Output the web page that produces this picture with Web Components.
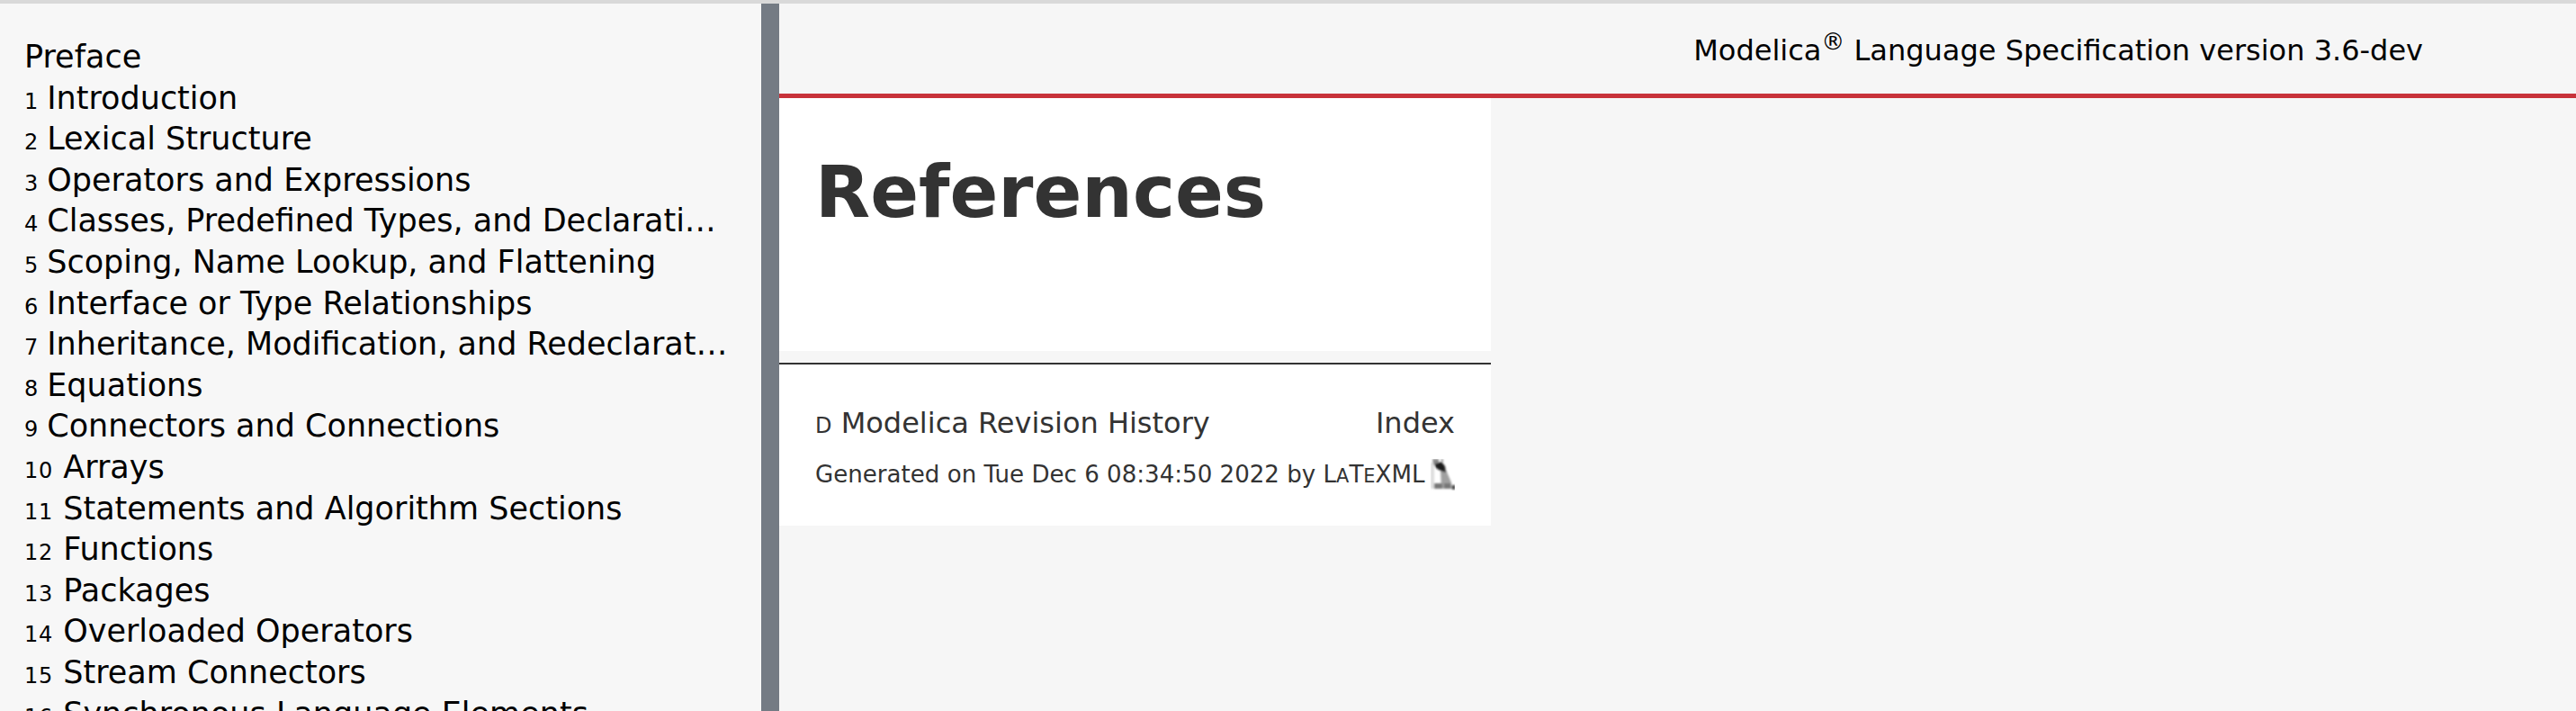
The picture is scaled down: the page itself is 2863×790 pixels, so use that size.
<!DOCTYPE html>
<html>
<head>
<meta charset="utf-8">
<title>References</title>
<style>
  html, body { margin: 0; height: 100%; overflow: hidden; background: #f6f6f6; }
  body { font-family: "DejaVu Sans", Verdana, sans-serif; }
</style>
</head>
<body>
<mls-page>
  <mls-toc>
    <mls-toc-item>Preface</mls-toc-item>
    <mls-toc-item num="1">Introduction</mls-toc-item>
    <mls-toc-item num="2">Lexical Structure</mls-toc-item>
    <mls-toc-item num="3">Operators and Expressions</mls-toc-item>
    <mls-toc-item num="4">Classes, Predefined Types, and Declarations</mls-toc-item>
    <mls-toc-item num="5">Scoping, Name Lookup, and Flattening</mls-toc-item>
    <mls-toc-item num="6">Interface or Type Relationships</mls-toc-item>
    <mls-toc-item num="7">Inheritance, Modification, and Redeclarations</mls-toc-item>
    <mls-toc-item num="8">Equations</mls-toc-item>
    <mls-toc-item num="9">Connectors and Connections</mls-toc-item>
    <mls-toc-item num="10">Arrays</mls-toc-item>
    <mls-toc-item num="11">Statements and Algorithm Sections</mls-toc-item>
    <mls-toc-item num="12">Functions</mls-toc-item>
    <mls-toc-item num="13">Packages</mls-toc-item>
    <mls-toc-item num="14">Overloaded Operators</mls-toc-item>
    <mls-toc-item num="15">Stream Connectors</mls-toc-item>
    <mls-toc-item num="16">Synchronous Language Elements</mls-toc-item>
  </mls-toc>
  <mls-main>
    <mls-header>Modelica<sup>®</sup> Language Specification version 3.6-dev</mls-header>
    <mls-article>
      <h1 slot="title">References</h1>
    </mls-article>
    <mls-footer></mls-footer>
  </mls-main>
</mls-page>

<script>
class MlsPage extends HTMLElement {
  constructor() {
    super();
    this.attachShadow({ mode: 'open' });
    this.shadowRoot.innerHTML = `
      <style>
        :host { display: flex; flex-direction: column; height: 790px; overflow: hidden; }
        .topline { flex: none; height: 4px; background: #d9d9d9; }
        .row { flex: 1; display: flex; min-height: 0; }
        ::slotted(mls-toc) { flex: none; width: 846px; }
        .bar { flex: none; width: 20px; background: #747b84; }
        ::slotted(mls-main) { flex: 1; min-width: 0; }
      </style>
      <div class="topline"></div>
      <div class="row">
        <slot name="toc"></slot>
        <div class="bar"></div>
        <slot name="main"></slot>
      </div>
    `;
  }
  connectedCallback() {
    this.querySelector('mls-toc').slot = 'toc';
    this.querySelector('mls-main').slot = 'main';
  }
}

class MlsToc extends HTMLElement {
  constructor() {
    super();
    this.attachShadow({ mode: 'open' });
    this.shadowRoot.innerHTML = `
      <style>
        :host { display: block; box-sizing: border-box; padding: 37px 0 0 27px; overflow: hidden; background: #f7f7f7; color: #000; }
      </style>
      <slot></slot>
    `;
  }
}

class MlsTocItem extends HTMLElement {
  constructor() {
    super();
    this.attachShadow({ mode: 'open' });
  }
  connectedCallback() {
    const num = this.getAttribute('num');
    const spacing = num && num.length > 1 ? 0.75 : -1.2;
    this.shadowRoot.innerHTML = `
      <style>
        :host { display: block; width: 785px; height: 45.6px; line-height: 45.6px; font-size: 35px; white-space: nowrap; overflow: hidden; text-overflow: ellipsis; }
        .num { font-size: 24px; letter-spacing: ${spacing}px; }
      </style>
      ${num ? `<span class="num">${num}</span> ` : ''}<slot></slot>
    `;
  }
}

class MlsMain extends HTMLElement {
  constructor() {
    super();
    this.attachShadow({ mode: 'open' });
    this.shadowRoot.innerHTML = `
      <style>
        :host { display: flex; flex-direction: column; }
      </style>
      <slot></slot>
    `;
  }
}

class MlsHeader extends HTMLElement {
  constructor() {
    super();
    this.attachShadow({ mode: 'open' });
    this.shadowRoot.innerHTML = `
      <style>
        :host { display: block; box-sizing: content-box; height: 100px; line-height: 104px; text-align: right; padding-right: 170px; font-size: 32px; color: #000; border-bottom: 5px solid #c8323a; }
        ::slotted(sup) { font-size: 26px; line-height: 0; vertical-align: 12px; }
      </style>
      <slot></slot>
    `;
  }
}

class MlsArticle extends HTMLElement {
  constructor() {
    super();
    this.attachShadow({ mode: 'open' });
    this.shadowRoot.innerHTML = `
      <style>
        :host { display: block; box-sizing: border-box; width: 791px; height: 281px; padding: 50px 40px 0; background: #fff; color: #333; }
        ::slotted(h1) { margin: 0; font-size: 79.4px; line-height: 110px; font-weight: bold; }
      </style>
      <slot name="title"></slot>
    `;
  }
}

class MlsFooter extends HTMLElement {
  constructor() {
    super();
    this.attachShadow({ mode: 'open' });
    this.shadowRoot.innerHTML = `
      <style>
        :host { display: block; box-sizing: border-box; width: 791px; margin-top: 13px; padding: 39px 40px 0; height: 181px; background: #fff; border-top: 2px solid #333; color: #333; font-size: 32px; }
        .nav { display: flex; justify-content: space-between; height: 57px; line-height: 52px; }
        .nav .num { font-size: 24px; }
        .gen { display: flex; justify-content: space-between; align-items: center; font-size: 26.1px; height: 52px; }
        .sm { font-size: 0.8em; }
        svg { flex: none; display: block; width: 27px; height: 35px; }
      </style>
      <div class="nav"><span><span class="num">D</span> Modelica Revision History</span><span>Index</span></div>
      <div class="gen">
        <span>Generated on Tue Dec 6 08:34:50 2022 by L<span class="sm">A</span>T<span class="sm">E</span>XML</span>
        <svg viewBox="0 0 27 35" aria-hidden="true">
          <defs><filter id="b" x="-10%" y="-10%" width="120%" height="120%"><feGaussianBlur stdDeviation="1"/></filter></defs>
          <g filter="url(#b)">
            <rect x="0" y="4" width="4" height="29" fill="#ddd"/>
            <path d="M2 0 L9 0 L9 6 L3 6 Z" fill="#888"/>
            <path d="M11 0 L14 0 L14 5 Z" fill="#999"/>
            <path d="M11 13 L17 12 L23 26 L24 33 L12 33 Z" fill="#a0a0a0"/>
            <path d="M4 6 L12 3 L16 8 L17 15 L11 13 L6 10 Z" fill="#1c1c1c"/>
            <path d="M4 27 L13 27 L13 33 L4 33 Z" fill="#777"/>
            <path d="M15 27 L22 27 L23 33 L15 33 Z" fill="#777"/>
            <rect x="24" y="29" width="3" height="5" fill="#333"/>
          </g>
        </svg>
      </div>
    `;
  }
}

customElements.define('mls-page', MlsPage);
customElements.define('mls-toc', MlsToc);
customElements.define('mls-toc-item', MlsTocItem);
customElements.define('mls-main', MlsMain);
customElements.define('mls-header', MlsHeader);
customElements.define('mls-article', MlsArticle);
customElements.define('mls-footer', MlsFooter);
</script>
</body>
</html>
